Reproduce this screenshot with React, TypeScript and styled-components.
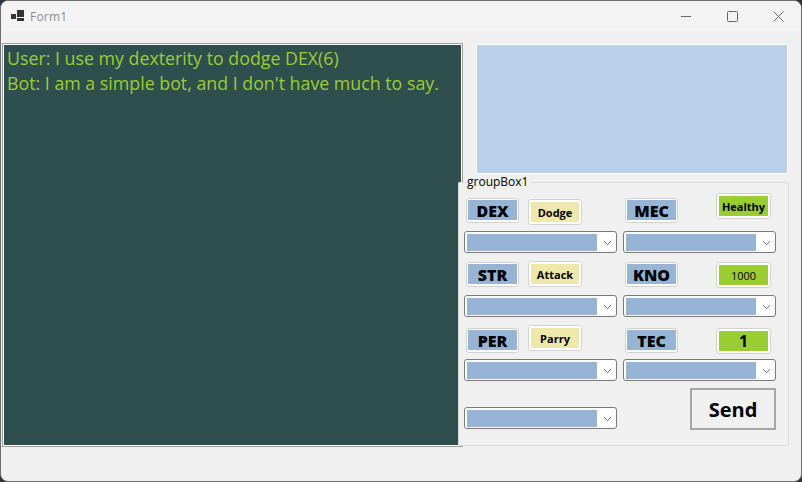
import styled, { createGlobalStyle } from 'styled-components';

const GlobalStyle = createGlobalStyle`
  html, body {
    margin: 0;
    padding: 0;
    background: #2c3542;
  }
  #root {
    width: 802px;
    height: 482px;
  }
`;

const uiFont = `"Open Sans", "Noto Sans", sans-serif`;

const Window = styled.div`
  box-sizing: border-box;
  width: 802px;
  height: 482px;
  border: 1px solid #6e6e6e;
  border-radius: 8px;
  overflow: hidden;
  background: #f0f0f0;
  display: flex;
  flex-direction: column;
  font-family: ${uiFont};
`;

const TitleBar = styled.div`
  height: 30px;
  flex: none;
  background: #f3f3f3;
  display: flex;
  align-items: center;
  padding-left: 9px;
`;

const TitleText = styled.span`
  margin-left: 6px;
  font-size: 12px;
  color: #8e8e8e;
  letter-spacing: 0.2px;
`;

const Controls = styled.div`
  margin-left: auto;
  display: flex;
  height: 100%;
`;

const ControlButton = styled.div`
  width: 46px;
  height: 100%;
  display: flex;
  align-items: center;
  justify-content: center;
  color: #676767;
`;

const Client = styled.div`
  flex: 1;
  display: flex;
  align-items: flex-start;
  padding: 12px 0 0 1px;
`;

const ChatBox = styled.div`
  box-sizing: border-box;
  width: 461px;
  height: 404px;
  flex: none;
  border: 1px solid #9e9e9e;
  box-shadow: inset 0 0 0 1px #ffffff;
  background: #2f4f4f;
  padding: 2px 0 0 4px;
  color: #9acd32;
  font-size: 17.8px;
  line-height: 24.5px;
`;

const RightColumn = styled.div`
  display: flex;
  flex-direction: column;
  align-items: flex-start;
`;

const Picture = styled.div`
  box-sizing: border-box;
  width: 312px;
  height: 130px;
  margin: 1px 0 0 13px;
  background: #bbd0ea;
  border: 1px solid #ffffff;
`;

const GroupBox = styled.fieldset`
  box-sizing: border-box;
  width: 331px;
  height: 272px;
  margin: 0 0 0 -5px;
  padding: 3px 0 0 5px;
  border: 1px solid #dcdcdc;
  border-radius: 2px;
  background: #f0f0f0;
  min-inline-size: 0;
  position: relative;
  z-index: 1;
`;

const Legend = styled.legend`
  margin-left: 2px;
  padding: 0 3px 0 1px;
  font-size: 12px;
  line-height: 16px;
  color: #000;
`;

const StatGrid = styled.div`
  display: grid;
  grid-template-columns: 153px 153px;
  column-gap: 6px;
`;

const StatBlock = styled.div`
  height: 64px;
  display: flex;
  flex-direction: column;
`;

const StatHeader = styled.div`
  height: 38px;
  display: flex;
  align-items: flex-start;
  padding-left: 2px;
`;

const StatLabel = styled.div<{ $top: number }>`
  box-sizing: border-box;
  width: 53px;
  height: 25px;
  margin-top: ${(p) => p.$top}px;
  border: 1px solid #d2d2d2;
  border-radius: 3px;
  background: #ffffff;
  padding: 1px 1px 2px 1px;
  display: flex;
`;

const LabelFill = styled.div`
  flex: 1;
  background: #98b4d4;
  display: flex;
  align-items: center;
  justify-content: center;
  font-size: 16px;
  font-weight: 800;
  color: #000;
  padding-top: 1px;
`;

const ActionButton = styled.div<{ $top: number; $gap: number; $width: number }>`
  box-sizing: border-box;
  width: ${(p) => p.$width}px;
  height: 26px;
  margin-top: ${(p) => p.$top}px;
  margin-left: ${(p) => p.$gap}px;
  border: 1px solid #d2d2d2;
  border-radius: 3px;
  background: #ffffff;
  padding: 2px;
  display: flex;
`;

const ButtonFill = styled.div<{ $color: string; $big?: boolean; $bold?: boolean }>`
  flex: 1;
  background: ${(p) => p.$color};
  display: flex;
  align-items: center;
  justify-content: center;
  font-size: ${(p) => (p.$big ? '16px' : '11px')};
  font-weight: ${(p) => (p.$bold ? 700 : 400)};
  color: #000;
`;

const Combo = styled.div<{ $top?: number }>`
  box-sizing: border-box;
  width: 153px;
  height: 22px;
  margin-top: ${(p) => p.$top ?? 0}px;
  border: 1px solid #7a7a7a;
  border-radius: 3px;
  background: #ffffff;
  padding: 2px 0 1px 2px;
  display: flex;
`;

const ComboFill = styled.div`
  width: 130px;
  background: #98b4d4;
`;

const ComboArrow = styled.div`
  flex: 1;
  display: flex;
  align-items: center;
  justify-content: center;
  padding-left: 1px;
`;

const BottomRow = styled.div`
  width: 312px;
  display: flex;
  justify-content: space-between;
  align-items: flex-start;
`;

const SendButton = styled.div`
  box-sizing: border-box;
  width: 86px;
  height: 42px;
  margin-top: 3px;
  border: 2px solid #a6a6a6;
  background: #f0f0f0;
  display: flex;
  align-items: center;
  justify-content: center;
  font-size: 20px;
  font-weight: 700;
  color: #000;
`;

function AppIcon() {
  return (
    <svg width="14" height="12" viewBox="0 0 14 12">
      <rect x="1" y="4" width="5" height="5" fill="#333" />
      <rect x="7" y="0" width="7" height="7" fill="#333" />
      <rect x="7" y="8" width="7" height="3" fill="#333" />
    </svg>
  );
}

function Chevron() {
  return (
    <svg width="9" height="6" viewBox="0 0 9 6">
      <path d="M1 1.2 L4.5 4.6 L8 1.2" fill="none" stroke="#6a6a6a" strokeWidth="1" />
    </svg>
  );
}

function ComboBox({ top }: { top?: number }) {
  return (
    <Combo $top={top}>
      <ComboFill />
      <ComboArrow>
        <Chevron />
      </ComboArrow>
    </Combo>
  );
}

interface Stat {
  name: string;
  labelTop: number;
  action: string;
  actionTop: number;
  gap: number;
  width: number;
  color: string;
  big?: boolean;
  bold?: boolean;
}

const stats: Stat[] = [
  { name: 'DEX', labelTop: 5, action: 'Dodge', actionTop: 6, gap: 9, width: 54, color: '#eee8aa', bold: true },
  { name: 'MEC', labelTop: 5, action: 'Healthy', actionTop: 0, gap: 38, width: 55, color: '#9acd32', bold: true },
  { name: 'STR', labelTop: 5, action: 'Attack', actionTop: 4, gap: 9, width: 54, color: '#eee8aa', bold: true },
  { name: 'KNO', labelTop: 5, action: '1000', actionTop: 5, gap: 38, width: 55, color: '#9acd32' },
  { name: 'PER', labelTop: 7, action: 'Parry', actionTop: 4, gap: 9, width: 54, color: '#eee8aa', bold: true },
  { name: 'TEC', labelTop: 7, action: '1', actionTop: 7, gap: 38, width: 55, color: '#9acd32', big: true, bold: true },
];

export default function App() {
  return (
    <>
      <GlobalStyle />
      <Window>
        <TitleBar>
          <AppIcon />
          <TitleText>Form1</TitleText>
          <Controls>
            <ControlButton>
              <svg width="10" height="10" viewBox="0 0 10 10">
                <path d="M0 5.5 H10" stroke="currentColor" strokeWidth="1" />
              </svg>
            </ControlButton>
            <ControlButton>
              <svg width="11" height="11" viewBox="0 0 11 11">
                <rect x="0.5" y="0.5" width="10" height="10" rx="1" fill="none" stroke="currentColor" strokeWidth="1" />
              </svg>
            </ControlButton>
            <ControlButton>
              <svg width="11" height="11" viewBox="0 0 11 11">
                <path d="M0.5 0.5 L10.5 10.5 M10.5 0.5 L0.5 10.5" stroke="currentColor" strokeWidth="1" />
              </svg>
            </ControlButton>
          </Controls>
        </TitleBar>
        <Client>
          <ChatBox>
            <div>User: I use my dexterity to dodge DEX(6)</div>
            <div>Bot: I am a simple bot, and I don't have much to say.</div>
          </ChatBox>
          <RightColumn>
            <Picture />
            <GroupBox>
              <Legend>groupBox1</Legend>
              <StatGrid>
                {stats.map((s) => (
                  <StatBlock key={s.name}>
                    <StatHeader>
                      <StatLabel $top={s.labelTop}>
                        <LabelFill>{s.name}</LabelFill>
                      </StatLabel>
                      <ActionButton $top={s.actionTop} $gap={s.gap} $width={s.width}>
                        <ButtonFill $color={s.color} $big={s.big} $bold={s.bold}>
                          {s.action}
                        </ButtonFill>
                      </ActionButton>
                    </StatHeader>
                    <ComboBox />
                  </StatBlock>
                ))}
              </StatGrid>
              <BottomRow>
                <ComboBox top={22} />
                <SendButton>Send</SendButton>
              </BottomRow>
            </GroupBox>
          </RightColumn>
        </Client>
      </Window>
    </>
  );
}
